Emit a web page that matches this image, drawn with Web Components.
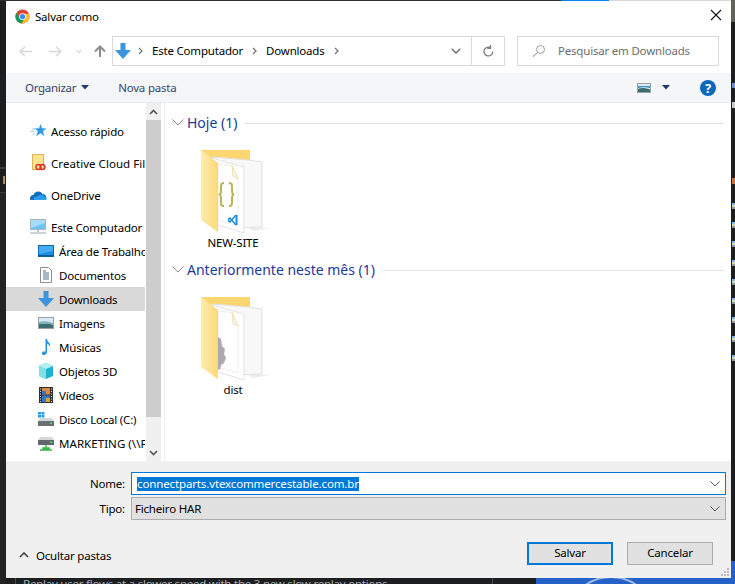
<!doctype html>
<html><head><meta charset="utf-8"><style>
html,body{margin:0;height:100%;overflow:hidden}
body{width:735px;height:584px;background:#1e1f21;font:12px "Noto Sans",sans-serif;position:relative}
</style></head><body>
<desk-backdrop></desk-backdrop>
<save-dialog>
  <title-bar slot="title">Salvar como</title-bar>
  <nav-bar slot="nav"></nav-bar>
  <tool-bar slot="tools"></tool-bar>
  <nav-pane slot="pane"></nav-pane>
  <file-pane slot="files"></file-pane>
  <form-pane slot="form"></form-pane>
</save-dialog>
<script>
const FONT='"Noto Sans","Open Sans",sans-serif';
function def(name,css,html){
  customElements.define(name,class extends HTMLElement{
    constructor(){super();const r=this.attachShadow({mode:'open'});r.innerHTML='<style>'+css+'</style>'+(typeof html==='function'?html(this):html);}
  });
}
const ICONS={
 star:'<svg viewBox="0 0 18 18" width="18" height="18"><path d="M3 7h3M2 9.500h3M3.500 12h2" stroke="#8fc6f0" stroke-width="1" fill="none"/><path d="M11.500 2l1.600 4.300 4.400.2-3.500 2.800 1.300 4.600-3.800-2.700-4.200 3 1.500-5-3.200-2.700 4.500-.2z" fill="#2f9be6"/></svg>',
 cc:'<svg viewBox="0 0 18 18" width="18" height="18"><rect x="3.500" y="0.500" width="11" height="15" fill="#fde58f" stroke="#d9b64b"/><circle cx="9.500" cy="13" r="2.500" fill="none" stroke="#d7332b" stroke-width="1.400"/><circle cx="13.500" cy="13" r="2.500" fill="none" stroke="#d7332b" stroke-width="1.400"/></svg>',
 cloud:'<svg viewBox="0 0 18 18" width="18" height="18"><path d="M1.500 14c-1.300-3 .7-5 3-5 1-4 7-5 9-1 3 0 4.500 3 3.500 6z" fill="#0f6cbd"/><path d="M5 14c-1-2 .8-4 3-3 2-3 6.500-3 7.500 0 2 0 2.500 2 1.500 3z" fill="#2a9df0"/></svg>',
 pc:'<svg viewBox="0 0 18 18" width="18" height="18"><rect x="1.500" y="1.500" width="15" height="10" fill="#6cc3f4" stroke="#a9b4bc"/><path d="M2 2h14v3L2 10z" fill="#a6dcf8"/><path d="M8 12h2v2H8z" fill="#bcc5cc"/><path d="M1 15h16" stroke="#b6c0c8" stroke-width="1.400"/></svg>',
 desk:'<svg viewBox="0 0 18 18" width="18" height="18"><rect x="1.500" y="3.500" width="15" height="11" fill="#1b90e8" stroke="#0c66ac"/><path d="M2 4h14v5L2 12z" fill="#45adf3"/><path d="M1 13h16v1.500H1z" fill="#0b5c9c"/></svg>',
 doc:'<svg viewBox="0 0 18 18" width="18" height="18"><path d="M3.500 1.500h8l3 3v12h-11z" fill="#fff" stroke="#8a8f94"/><path d="M6 5h3M6 7h6M6 9h6M6 11h6M6 13h6" stroke="#4f6f8f"/></svg>',
 down:'<svg viewBox="0 0 18 18" width="18" height="18"><path d="M6.500 1h5v7h5.500l-8 9-8-9h5.500z" fill="#3a94de"/></svg>',
 img:'<svg viewBox="0 0 18 18" width="18" height="18"><rect x="1.500" y="3.500" width="15" height="11" fill="#d5e9f6" stroke="#9aa0a5"/><path d="M2 10c3-2 7-2 14 1v3H2z" fill="#3f6e70"/><path d="M2 8c4-1 8-1 14 1v1H2z" fill="#85b3bb"/></svg>',
 music:'<svg viewBox="0 0 18 18" width="18" height="18"><path d="M8.500 1h1.400c.4 3 4 3.500 3.100 8-.5-2-1.800-3-3-3.300V14c0 2-2 3.200-3.800 3-1.800-.3-1.800-2.500-.2-3.200 1-.5 2-.5 2.500-.2z" fill="#1f95e6"/></svg>',
 cube:'<svg viewBox="0 0 18 18" width="18" height="18"><path d="M9 1l7 3v10l-7 3-7-3V4z" fill="#1ab3d1"/><path d="M2 4l7 3v10l-7-3z" fill="#7fe0ea"/><path d="M9 1l7 3-7 3-7-3z" fill="#b5f0f5"/></svg>',
 film:'<svg viewBox="0 0 18 18" width="18" height="18"><rect x="2" y="1" width="14" height="16" fill="#2c3138"/><rect x="5" y="2" width="8" height="6.500" fill="#e2883a"/><rect x="5" y="9.500" width="8" height="6.500" fill="#3a78c4"/><path d="M5 5h4v3.500H5z" fill="#3d72b8"/><path d="M9 12h4v4H9z" fill="#d8a33c"/><path d="M3 3h1M3 5.500h1M3 8h1M3 10.500h1M3 13h1M3 15.500h1M14 3h1M14 5.500h1M14 8h1M14 10.500h1M14 13h1M14 15.500h1" stroke="#dfe3e6"/></svg>',
 disk:'<svg viewBox="0 0 18 18" width="18" height="18"><path d="M1 2h3v2.500H1zM4.500 2h3v2.500h-3zM1 5h3v2.500H1zM4.500 5h3v2.500h-3z" fill="#22a0ee"/><path d="M1 11l2-3h12l2 3z" fill="#d4d8db"/><rect x="1" y="11" width="16" height="5" fill="#6a6f73"/><rect x="13" y="12.500" width="2" height="1.500" fill="#47e06a"/></svg>',
 net:'<svg viewBox="0 0 18 18" width="18" height="18"><path d="M1 6l2-3h12l2 3z" fill="#d4d8db"/><rect x="1" y="6" width="16" height="5" fill="#62676b"/><rect x="13" y="7.500" width="2" height="1.500" fill="#47e06a"/><path d="M9 11v3M3 16h12M6 14h6v2H6z" stroke="#3eb44c" stroke-width="1.500" fill="#3eb44c"/></svg>'
};
const folder=(inner,id)=>`<svg width="64" height="84" viewBox="0 0 64 84" style="overflow:visible"><defs>
<linearGradient id="f${id}" x1="0" x2="1"><stop offset="0" stop-color="#fdecb0"/><stop offset="1" stop-color="#fbd977"/></linearGradient></defs>
<path d="M0 0h49v11H0z" fill="#fbd671"/>
<path d="M47 78l14-.500 9 .500-18 3z" fill="#ececec"/>
<path d="M12 7l35 3 14 2v65l-18 .500z" fill="#f8f8f8" stroke="#e0e0e0"/>
<path d="M7 7l36 10v66L17 75z" fill="#fff" stroke="#e2e2e2"/>
<path d="M17 14l14 1.500 6 13.500v47l-20-6z" fill="#fff" stroke="#ededed"/>
<path d="M31 15.500l1 11 5 2.500z" fill="#f6f6f6" stroke="#f1e0ac"/>
${inner}
<path d="M0 0l17 13v69L0 70z" fill="url(#f${id})" />
</svg>`;
const braces=`<g fill="none" stroke="#b8b54c" stroke-width="2"><path d="M23 33c-3 0-3 1-3 5 0 5 0 6-2 6.500 2 .5 2 2 2 6.500 0 4 0 5 3 5"/><path d="M28 33c3 0 3 1 3 5 0 5 0 6 2 6.500-2 .5-2 2-2 6.500 0 4 0 5-3 5"/></g><path d="M35.500 65v10" stroke="#1e8ed8" stroke-width="2"/><path d="M35 65l-6 7-2-1.500M35 75l-6-7-2 1.500" stroke="#1e8ed8" stroke-width="1.600" fill="none"/>`;
const gear=`<path d="M17 40l3 2 1 7 3 3-1 5 2 4-2 5-3 2-1 5-2-1z" fill="#a8abae"/>`;

def('desk-backdrop',`:host{position:absolute;inset:0;display:block;background:#1d1e20;color:#a9adb2;overflow:hidden}
div{position:absolute}
.top{left:0;right:0;top:0;height:1px;background:#2f2f2f}
.blue{left:561px;top:0;width:48px;height:1px;background:#0a84ea}
.light{left:609px;top:0;width:126px;height:1px;background:#d8d8d8}
.band1{left:0;top:167px;width:6px;height:2px;background:#3b3c3e}
.band2{left:0;top:192px;width:6px;height:1px;background:#3b3c3e}
.low{left:0;top:193px;width:6px;height:391px;background:#232324}
.blip{left:3px;top:176px;width:2px;height:8px;background:linear-gradient(90deg,#3c8fc8,#d69a55)}
.tr{left:731px;top:0;width:4px;height:22px;background:#62625a}
.r1{left:732px;top:83px;width:3px;height:5px;background:#6f8fd0}
.r2{left:732px;top:102px;width:3px;height:6px;background:#c9c9c9}
.r3{left:732px;top:178px;width:3px;height:6px;background:#c76f45}
.sp{left:732px;top:203px;width:3px;height:170px;background:repeating-linear-gradient(180deg,#7fb8e8 0 2px,#d6d6a8 2px 4px,#8f9aa0 4px 6px,transparent 6px 19px)}
.v1{left:15px;top:578px;width:1px;height:6px;background:#4a4a4a}
.v2{left:492px;top:578px;width:1px;height:6px;background:#4a4a4a}
.txt{left:23px;top:577px;font:11.500px "Noto Sans",sans-serif;letter-spacing:-.23px;white-space:nowrap;color:#a7abb1;line-height:14px}
.pic{left:536px;top:561px;width:199px;height:23px;background:#2562c8;overflow:hidden}
.arc{left:30px;top:15px;width:86px;height:86px;border-radius:50%;border:2px solid #9db8e6}`,
`<div class="top"></div><div class="blue"></div><div class="light"></div><div class="low"></div><div class="band1"></div><div class="band2"></div><div class="blip"></div><div class="tr"></div><div class="r1"></div><div class="r2"></div><div class="r3"></div><div class="sp"></div><div class="v1"></div><div class="v2"></div><div class="pic"><div class="arc"></div></div><div class="txt">Replay user flows at a slower speed with the 3 new slow replay options</div>`);

def('save-dialog',`:host{position:absolute;left:6px;top:1px;width:725px;height:577px;display:flex;flex-direction:column;background:#fff;font-family:${FONT};font-size:11.500px;letter-spacing:-.2px;color:#000;overflow:hidden}
.body{flex:1;min-height:0;display:flex}
::slotted(nav-pane){width:155px;flex:none}
::slotted(file-pane){flex:1;min-width:0}`,
`<slot name="title"></slot><slot name="nav"></slot><slot name="tools"></slot><div class="body"><slot name="pane"></slot><slot name="files"></slot></div><slot name="form"></slot>`);

def('title-bar',`:host{display:flex;align-items:center;height:30px;padding-left:9px;gap:5px;position:relative;flex:none}
svg.c{display:block}
.x{position:absolute;right:9px;top:8px}`,
`<svg class="c" width="15" height="15" viewBox="0 0 16 16"><circle cx="8" cy="8" r="7.500" fill="#db4437"/><path d="M1.500 4.200A7.500 7.500 0 0 0 7 15.500L10.500 10 5 10z" fill="#0f9d58"/><path d="M8 5h6.700A7.500 7.500 0 0 1 7 15.500l3.500-6z" fill="#fbc02d"/><circle cx="8" cy="8" r="3.600" fill="#fff"/><circle cx="8" cy="8" r="2.800" fill="#4285f4"/></svg><span><slot></slot></span>
<svg class="x" width="12" height="12" viewBox="0 0 12 12"><path d="M1 1l10 10M11 1L1 11" stroke="#111" stroke-width="1.100"/></svg>`);

def('nav-bar',`:host{display:flex;align-items:flex-start;height:42px;flex:none;box-sizing:border-box;padding-top:5px}
.btns{display:flex;align-items:center;height:30px;width:106px;flex:none;box-sizing:border-box;padding-left:13px}
.addr{width:393px;height:30px;box-sizing:border-box;border:1px solid #d9d9d9;display:flex;align-items:center;flex:none}
.crumb{display:flex;align-items:center;flex:1}
.crumb span,.search span{padding-bottom:2px}
.sep{width:5px;display:block;margin:0 9px}
.dd{width:31px;display:flex;justify-content:center}
.ref{width:33px;height:100%;box-sizing:border-box;border-left:1px solid #d9d9d9;display:flex;align-items:center;justify-content:center}
.search{margin-left:12px;width:202px;height:30px;box-sizing:border-box;border:1px solid #d9d9d9;display:flex;align-items:center;color:#6d6d6d;flex:none}
.search svg{margin:0 13px 0 14px}`,
`<div class="btns">
<svg width="13" height="11" viewBox="0 0 13 11" style="margin-right:17px"><path d="M1 5.500h12M6 .8L1.200 5.500 6 10.200" stroke="#d8d8d8" stroke-width="1.500" fill="none"/></svg>
<svg width="13" height="11" viewBox="0 0 13 11" style="margin-right:14px"><path d="M0 5.500h12M7 .8l4.800 4.700L7 10.200" stroke="#d8d8d8" stroke-width="1.500" fill="none"/></svg>
<svg width="6" height="5" viewBox="0 0 6 5" style="margin-right:12px"><path d="M.5 1l2.500 2.500L5.500 1" stroke="#d8d8d8" stroke-width="1.200" fill="none"/></svg>
<svg width="12" height="12" viewBox="0 0 12 12"><path d="M6 12V1.500M1 6.500l5-5 5 5" stroke="#8c8c8c" stroke-width="2" fill="none"/></svg>
</div>
<div class="addr">
<svg width="16" height="16" viewBox="0 0 16 16" style="margin-left:2px"><path d="M5.500 0h5v7H16l-8 9-8-9h5.500z" fill="#3a94de"/></svg>
<div class="crumb">
<svg class="sep" style="margin-left:7px" width="5" height="8" viewBox="0 0 5 8"><path d="M1 1l3 3-3 3" stroke="#777" stroke-width="1.300" fill="none"/></svg><span>Este Computador</span>
<svg class="sep" width="5" height="8" viewBox="0 0 5 8"><path d="M1 1l3 3-3 3" stroke="#777" stroke-width="1.300" fill="none"/></svg><span>Downloads</span>
<svg class="sep" width="5" height="8" viewBox="0 0 5 8"><path d="M1 1l3 3-3 3" stroke="#777" stroke-width="1.300" fill="none"/></svg>
</div>
<div class="dd"><svg width="10" height="6" viewBox="0 0 10 6"><path d="M.7.7l4.300 4.300L9.300.7" stroke="#777" stroke-width="1.600" fill="none"/></svg></div>
<div class="ref"><svg width="11" height="12" viewBox="0 0 11 12"><path d="M9.800 6.500a4.400 4.400 0 1 1-2-3.700M7.500 0v3.300H4.300" stroke="#7f7f7f" stroke-width="1.300" fill="none"/></svg></div>
</div>
<div class="search"><svg width="13" height="12" viewBox="0 0 13 12"><circle cx="8.500" cy="4.500" r="4" fill="none" stroke="#9a9a9a"/><path d="M5.500 7.500l-5 4.500" stroke="#9a7f80"/></svg><span>Pesquisar em Downloads</span></div>`);

def('tool-bar',`:host{display:flex;align-items:center;background:#f5f6f7;flex:none;color:#33456b;padding-left:19px;border-bottom:1px solid #e8eaec;box-sizing:border-box;height:30px}
.o{display:flex;align-items:center;gap:5px;letter-spacing:-.3px}
.n{margin-left:29px}
.right{margin-left:auto;display:flex;align-items:center}
.help{width:16px;height:16px;border-radius:50%;background:#0c68bd;color:#fff;font:bold 13px/16px "Noto Sans",sans-serif;letter-spacing:0;text-align:center;margin:0 15px 0 30px}`,
`<span class="o">Organizar<svg width="8" height="5" viewBox="0 0 8 5"><path d="M0 0h8L4 4.500z" fill="#1d3b66"/></svg></span><span class="n">Nova pasta</span>
<div class="right">
<svg width="14" height="10" viewBox="0 0 14 10"><rect x=".5" y=".5" width="13" height="9" fill="#dfeaf1" stroke="#9a9fa3"/><path d="M1 6c3-1.500 7-1.500 12 .5V9H1z" fill="#3b6c70"/><path d="M1 3h12v2c-4-1-8-1-12 0z" fill="#3f95c6"/></svg>
<svg width="8" height="5" viewBox="0 0 8 5" style="margin-left:11px"><path d="M0 0h8L4 4.500z" fill="#1d3b66"/></svg>
<div class="help">?</div>
</div>`);

def('nav-item',`:host{display:flex;align-items:center;height:24px;gap:3px;white-space:nowrap;overflow:hidden;box-sizing:border-box;padding-left:var(--ind,24px);color:#000}
:host([sel]){background:#d9d9d9}
.i{width:18px;height:18px;flex:none;display:block}
.i svg{display:block;margin-left:-1px}`,
el=>`<span class="i">${ICONS[el.getAttribute('icon')]}</span><slot></slot>`);

def('nav-pane',`:host{display:flex;height:100%;flex:none}
.list{width:139px;flex:none;overflow:hidden;padding-top:16px;box-sizing:border-box}
.sb{width:15px;margin-left:1px;background:#f0f0f0;display:flex;flex-direction:column;flex:none}
.ar{height:17px;display:flex;align-items:center;justify-content:center;flex:none}
.th{height:297px;background:#cdcdcd}
.fill{flex:1}
.g{height:8px}
nav-item.c{--ind:32px}
nav-item.w{letter-spacing:.05px}`,
`<div class="list">
<nav-item icon="star">Acesso rápido</nav-item><div class="g"></div>
<nav-item class="w" icon="cc">Creative Cloud Files</nav-item><div class="g"></div>
<nav-item icon="cloud">OneDrive</nav-item><div class="g"></div>
<nav-item icon="pc">Este Computador</nav-item>
<nav-item class="c" icon="desk">Área de Trabalho</nav-item>
<nav-item class="c" icon="doc">Documentos</nav-item>
<nav-item class="c" sel icon="down">Downloads</nav-item>
<nav-item class="c" icon="img">Imagens</nav-item>
<nav-item class="c" icon="music">Músicas</nav-item>
<nav-item class="c" icon="cube">Objetos 3D</nav-item>
<nav-item class="c" icon="film">Vídeos</nav-item>
<nav-item class="c" icon="disk">Disco Local (C:)</nav-item>
<nav-item class="c w" icon="net">MARKETING (\\\\FS)</nav-item>
</div>
<div class="sb"><div class="ar"><svg width="9" height="6" viewBox="0 0 9 6"><path d="M1 5l3.500-3.500L8 5" stroke="#555" stroke-width="1.600" fill="none"/></svg></div><div class="th"></div><div class="fill"></div><div class="ar"><svg width="9" height="6" viewBox="0 0 9 6"><path d="M1 1l3.500 3.500L8 1" stroke="#555" stroke-width="1.600" fill="none"/></svg></div></div>`);

def('group-head',`:host{display:flex;align-items:center;height:20px;color:#1a3a9a;font-size:14px;letter-spacing:0;gap:3px}
.rule{flex:1;height:1px;background:#e2e2e2;margin:2px 0 0 5px}`,
`<svg width="12" height="7" viewBox="0 0 12 7"><path d="M.5 .5l5.500 5.500L11.500 .5" stroke="#8a8a8a" fill="none"/></svg><span><slot></slot></span><div class="rule"></div>`);

def('folder-tile',`:host{display:flex;flex-direction:column;align-items:center;width:100px;letter-spacing:-.2px}
svg{display:block}
.lb{margin-top:1px;line-height:16px;text-align:center}`,
el=>`${folder(el.getAttribute('kind')==='code'?braces:gear,el.getAttribute('kind'))}<div class="lb"><slot></slot></div>`);

def('file-pane',`:host{display:block;height:100%;margin-left:3px;border-left:1px solid #f0f0f0;padding:9px 7px 0 7px;box-sizing:border-box}
.t{padding:18px 0 0 11px}`,
`<group-head>Hoje (1)</group-head>
<div class="t"><folder-tile kind="code">NEW-SITE</folder-tile></div>
<group-head style="margin-top:8px">Anteriormente neste mês (1)</group-head>
<div class="t"><folder-tile kind="gear">dist</folder-tile></div>`);

def('form-pane',`:host{display:block;height:117px;background:#f0f0f0;flex:none;position:relative;box-sizing:border-box;padding-top:11px}
.row{display:flex;align-items:center;height:23px;margin-bottom:2px}
.lab{width:125px;text-align:right;padding-right:6px;box-sizing:border-box;flex:none}
.box{width:595px;height:23px;box-sizing:border-box;display:flex;align-items:center;flex:none;padding-left:5px}
.box svg{margin-left:auto;margin-right:5px}
.nm{background:#fff;border:1px solid #0078d7}
.tp{background:#e1e1e1;border:1px solid #adadad;padding-left:3px}
.sel{background:#0078d7;color:#fff;line-height:14px;letter-spacing:-.13px}
.foot{position:absolute;left:0;right:0;bottom:13px;height:24px;display:flex;align-items:center;padding-left:13px}
.oc{display:flex;align-items:center;gap:7px;margin-top:4px}
.btn{height:23px;width:86px;box-sizing:border-box;background:#e1e1e1;border:1px solid #adadad;display:flex;align-items:center;justify-content:center;padding-bottom:2px}
.pri{border:2px solid #0078d7;margin-left:auto}
.can{margin-left:14px;margin-right:18px}
.grip{position:absolute;right:1px;bottom:1px}`,
`<div class="row"><div class="lab">Nome:</div><div class="box nm"><span class="sel">connectparts.vtexcommercestable.com.br</span><svg width="10" height="6" viewBox="0 0 10 6"><path d="M.5.5l4.500 4.500 4.500-4.500" stroke="#555" fill="none"/></svg></div></div>
<div class="row"><div class="lab">Tipo:</div><div class="box tp">Ficheiro HAR<svg width="10" height="6" viewBox="0 0 10 6"><path d="M.5.5l4.500 4.500 4.500-4.500" stroke="#555" fill="none"/></svg></div></div>
<div class="foot"><span class="oc"><svg width="10" height="6" viewBox="0 0 10 6"><path d="M1 5l4-4 4 4" stroke="#444" stroke-width="1.600" fill="none"/></svg>Ocultar pastas</span><div class="btn pri">Salvar</div><div class="btn can">Cancelar</div></div>
<svg class="grip" width="9" height="9" viewBox="0 0 9 9"><path d="M6 0h2v2H6zM3 3h2v2H3zM6 3h2v2H6zM0 6h2v2H0zM3 6h2v2H3zM6 6h2v2H6z" fill="#bcbcbc"/></svg>`);
</script>
</body></html>
